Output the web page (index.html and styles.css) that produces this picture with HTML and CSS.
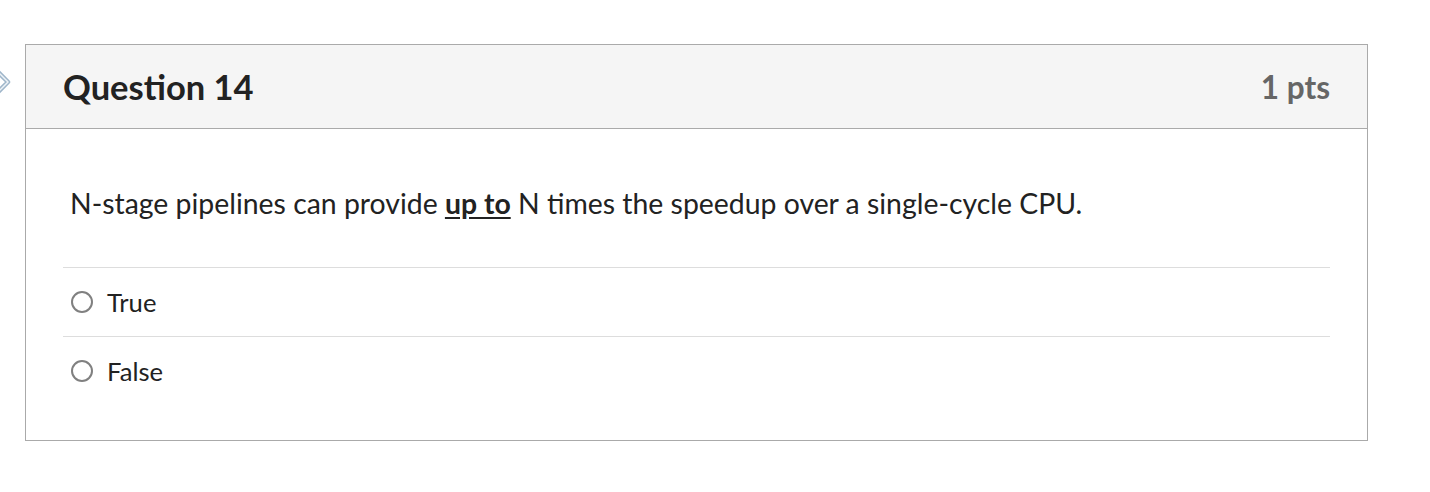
FILE: index.html
```html
<!DOCTYPE html>
<html>
<head>
<meta charset="utf-8">
<link rel="stylesheet" href="styles.css">
</head>
<body>
<svg class="nav-arrow" width="14" height="40" viewBox="0 0 14 40">
  <polyline points="-6,6 8,20 -6,34" fill="none" stroke="#9fb6ca" stroke-width="4.5" stroke-linejoin="round"/>
  <polyline points="-6,6 8,20 -6,34" fill="none" stroke="#eef3f7" stroke-width="1.5" stroke-linejoin="round"/>
</svg>
<div class="question">
  <div class="q-header">
    <h2 class="q-title">Question 14</h2>
    <span class="q-points">1 pts</span>
  </div>
  <div class="q-body">
    <p class="q-text">N-stage pipelines can provide <strong class="u">up to</strong> N times the speedup over a single-cycle CPU.</p>
    <div class="answers">
      <label class="answer"><span class="radio"></span><span class="answer-label">True</span></label>
      <label class="answer"><span class="radio"></span><span class="answer-label">False</span></label>
    </div>
  </div>
</div>
</body>
</html>
```
FILE: styles.css
```css
html, body {
  margin: 0;
  padding: 0;
  background: #ffffff;
  font-family: Lato, "Liberation Sans", sans-serif;
  color: #2d3b45;
}
body {
  position: relative;
  padding: 44px 0 0 25px;
}
.nav-arrow {
  position: absolute;
  left: 0;
  top: 62px;
}
.question {
  width: 1341px;
  border: 1px solid #aaaaaa;
  background: #fff;
}
.q-header {
  display: flex;
  align-items: center;
  justify-content: space-between;
  height: 83px;
  padding: 0 37px;
  background: #f5f5f5;
  border-bottom: 1px solid #aaaaaa;
}
.q-title {
  margin: 0;
  font-size: 34.5px;
  font-weight: 700;
  color: #222222;
}
.q-points {
  font-size: 31.5px;
  font-weight: 700;
  color: #666666;
}
.q-body {
  padding: 54px 37px 35px 37px;
}
.q-text {
  margin: 0 0 0 7px;
  font-size: 28.4px;
  line-height: 40px;
  color: #222222;
}
.q-text .u {
  font-weight: 700;
  text-decoration: underline;
  text-underline-offset: 3px;
}
.answers {
  margin-top: 44px;
}
.answer {
  display: flex;
  align-items: center;
  gap: 14px;
  height: 68px;
  border-top: 1px solid #dddddd;
  padding-left: 8px;
}
.radio {
  width: 22px;
  height: 22px;
  border: 2px solid #808080;
  border-radius: 50%;
  box-sizing: border-box;
}
.answer-label {
  font-size: 25.6px;
  color: #222222;
}
```
